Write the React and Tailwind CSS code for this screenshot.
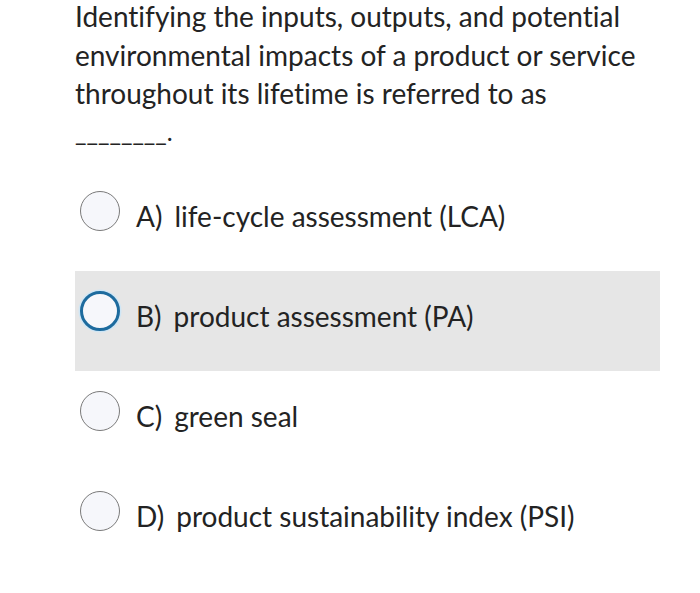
export default function App() {
  const options = [
    { key: "A)", text: "life-cycle assessment (LCA)" },
    { key: "B)", text: "product assessment (PA)", hover: true },
    { key: "C)", text: "green seal" },
    { key: "D)", text: "product sustainability index (PSI)" },
  ];

  return (
    <div
      className="bg-white w-[700px] h-[593px] overflow-hidden text-[#232323] [font-variant-ligatures:none]"
      style={{ fontFamily: "Lato, 'Open Sans', sans-serif" }}
    >
      <div className="pl-[75px] w-[660px]">
        {/* 질문 */}
        <p className="text-[28px] leading-[38.5px] -mt-[3px]">
          Identifying the inputs, outputs, and potential environmental impacts of a product or service
          throughout its lifetime is referred to as
        </p>
        <p className="text-[25px] leading-[38.5px] -mt-[1px]">________.</p>

        {/* 보기 */}
        <div className="mt-[21px]">
          {options.map((o) => (
            <div
              key={o.key}
              className={
                "h-[100px] flex items-center gap-[16px] pl-[5px] pb-[20px] " +
                (o.hover ? "bg-[#e6e6e6]" : "")
              }
            >
              <span
                className={
                  "w-[40px] h-[40px] rounded-full shrink-0 bg-[#f6f7fb] " +
                  (o.hover
                    ? "border-[3.5px] border-[#1d6b9e] shadow-[0_0_0_1.5px_#cfe6f5]"
                    : "border-[1.5px] border-[#7a7a7a]")
                }
              ></span>
              <span className="text-[28px] flex gap-[12px] pt-[10px]">
                <span>{o.key}</span>
                <span>{o.text}</span>
              </span>
            </div>
          ))}
        </div>
      </div>
    </div>
  );
}
